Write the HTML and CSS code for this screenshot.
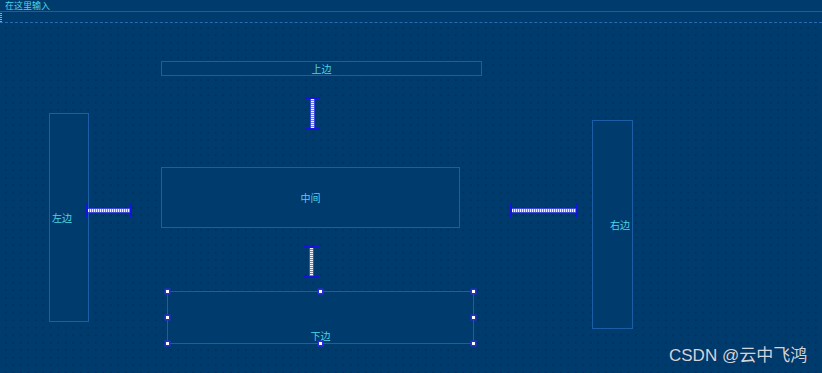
FILE: index.html
```html
<!DOCTYPE html>
<html>
<head>
<meta charset="utf-8">
<link rel="stylesheet" href="styles.css">
</head>
<body>
<div class="app">
  <div class="menubar"><span class="menu-item">在这里输入</span></div>
  <div class="toolbar"><span class="grip"></span></div>
  <div class="canvas">
    <div class="label top">上边</div>
    <div class="vspacer vs1"><i></i></div>
    <div class="label mid">中间</div>
    <div class="vspacer vs2"><i></i></div>
    <div class="label bottom">下边</div>
    <span class="handle" style="left:165px;top:266px"></span>
    <span class="handle" style="left:318px;top:266px"></span>
    <span class="handle" style="left:471px;top:266px"></span>
    <span class="handle" style="left:165px;top:292px"></span>
    <span class="handle" style="left:471px;top:292px"></span>
    <span class="handle" style="left:165px;top:318px"></span>
    <span class="handle" style="left:318px;top:318px"></span>
    <span class="handle" style="left:471px;top:318px"></span>
    <div class="label left">左边</div>
    <div class="hspacer hs1"><i></i></div>
    <div class="hspacer hs2"><i></i></div>
    <div class="label right">右边</div>
    <div class="watermark">CSDN @云中飞鸿</div>
  </div>
</div>
</body>
</html>
```
FILE: styles.css
```css
html, body {
  margin: 0;
  padding: 0;
  background: #003b6e;
  overflow: hidden;
}
.app {
  width: 822px;
  height: 373px;
  display: flex;
  flex-direction: column;
  font-family: "Noto Sans CJK SC", "Noto Sans", sans-serif;
  background: #003b6e;
}
.menubar {
  height: 11px;
  border-bottom: 1px solid #1d5f9e;
  display: flex;
  align-items: center;
}
.menu-item {
  font-size: 9px;
  line-height: 11px;
  color: #4ed4e6;
  margin-left: 5px;
}
.toolbar {
  height: 10px;
  border-bottom: 1px dashed #2a6cae;
  display: flex;
}
.grip {
  width: 2px;
  height: 9px;
  margin-top: 1px;
  background: repeating-linear-gradient(#8aa6c8 0 1px, transparent 1px 2px);
}
.canvas {
  position: relative;
  flex: 1;
  background-color: #003b6e;
  background-image: radial-gradient(circle, #032d56 0.6px, transparent 0.8px);
  background-size: 7.5px 7.5px;
  background-position: 2px 1px;
}
.label {
  position: absolute;
  box-sizing: border-box;
  border: 1px solid #1a5fa6;
  color: #4ed4e6;
  font-size: 10px;
  display: flex;
  align-items: center;
  justify-content: center;
  background: #003b6e;
}
.top { left: 161px; top: 38px; width: 321px; height: 15px; }
.mid { left: 161px; top: 144px; width: 299px; height: 61px; }
.bottom {
  left: 167px; top: 268px; width: 307px; height: 53px;
  align-items: flex-end;
}
.left {
  left: 49px; top: 90px; width: 40px; height: 209px;
  justify-content: flex-start;
  padding-left: 2px;
}
.right {
  left: 592px; top: 97px; width: 41px; height: 209px;
  justify-content: flex-end;
  padding-right: 2px;
  padding-bottom: 1px;
}
.handle {
  position: absolute;
  width: 3px;
  height: 3px;
  background: #ffffff;
  border: 1px solid #2a2ae6;
  box-shadow: 0 0 0 0.5px #2a2ae6;
}
.vspacer {
  position: absolute;
  width: 15px;
  box-sizing: border-box;
  border-top: 2px solid #1414dc;
  border-bottom: 2px solid #1414dc;
  display: flex;
  justify-content: center;
}
.vspacer i {
  width: 5px;
  background: repeating-linear-gradient(#f2f4ff 0 1px, #6f7ee0 1px 2px);
  border-left: 1px solid #3a4ad8;
  border-right: 1px solid #3a4ad8;
  box-sizing: border-box;
}
.vs1 { left: 305px; top: 74px; height: 33px; }
.vs2 { left: 304px; top: 223px; height: 32px; }
.hspacer {
  position: absolute;
  height: 14px;
  box-sizing: border-box;
  border-left: 2px solid #1414dc;
  border-right: 2px solid #1414dc;
  display: flex;
  align-items: center;
}
.hspacer i {
  flex: 1;
  height: 5px;
  background: repeating-linear-gradient(90deg, #f2f4ff 0 1px, #6f7ee0 1px 2px);
  border-top: 1px solid #3a4ad8;
  border-bottom: 1px solid #3a4ad8;
  box-sizing: border-box;
}
.hs1 { left: 86px; top: 180px; width: 46px; }
.hs2 { left: 510px; top: 180px; width: 68px; }
.watermark {
  position: absolute;
  left: 669px;
  top: 318px;
  font-family: "Liberation Sans", "Noto Sans CJK SC", sans-serif;
  font-size: 17px;
  color: #cfd6de;
  text-shadow: 0 0 1px #1a2a40;
  white-space: nowrap;
}
```
